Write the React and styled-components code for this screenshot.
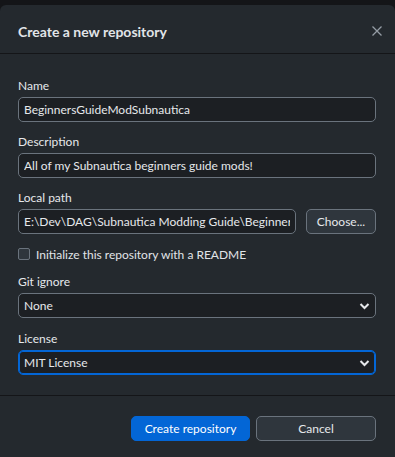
import React from "react";
import styled, { createGlobalStyle } from "styled-components";

const Global = createGlobalStyle`
  html, body {
    margin: 0;
    padding: 0;
    background: #141518;
    font-family: Lato, "Liberation Sans", sans-serif;
  }
`;

const Page = styled.div`
  width: 395px;
  height: 457px;
  padding-top: 5px;
  box-sizing: border-box;
  background: #141518;
  overflow: hidden;
`;

const Dialog = styled.div`
  height: 452px;
  background: #24292e;
  border-radius: 6px 6px 0 0;
  color: #e1e4e8;
  display: flex;
  flex-direction: column;
`;

const Header = styled.div`
  height: 49px;
  flex-shrink: 0;
  display: flex;
  align-items: center;
  justify-content: space-between;
  padding: 4px 11px 0 18px;
  box-sizing: border-box;
  border-bottom: 1px solid #141518;
`;

const Title = styled.h1`
  margin: 0;
  font-size: 14px;
  font-weight: 700;
  color: #e1e4e8;
`;

const Close = styled.button`
  background: none;
  border: none;
  padding: 0;
  width: 14px;
  height: 14px;
  display: flex;
  align-items: center;
  justify-content: center;
`;

const Body = styled.div`
  padding: 24px 19px 0 18px;
  height: 342px;
  flex-shrink: 0;
  display: flex;
  flex-direction: column;
  border-bottom: 1px solid #141518;
  box-sizing: border-box;
`;

const Field = styled.div`
  display: flex;
  flex-direction: column;
  margin-bottom: ${(p) => (p.$gap ?? 12)}px;
`;

const Label = styled.label`
  font-size: 12px;
  line-height: 16px;
  margin-bottom: 3px;
  color: #e6e8eb;
`;

const Input = styled.div`
  height: 25px;
  flex-shrink: 0;
  box-sizing: border-box;
  border: 1px solid ${(p) => (p.$focus ? "#0366d6" : "#6a737d")};
  box-shadow: ${(p) => (p.$focus ? "0 0 0 1px #0366d6 inset" : "none")};
  border-radius: 5px;
  background: #1c1f23;
  padding: 0 5px;
  font-size: 12px;
  display: flex;
  align-items: center;
  justify-content: space-between;
  gap: 4px;
  overflow: hidden;
  min-width: 0;
  color: #e6e8eb;
`;

const Value = styled.span`
  flex: 1;
  min-width: 0;
  white-space: nowrap;
  overflow: hidden;
  text-overflow: clip;
`;

const Row = styled.div`
  display: flex;
  gap: 10px;

  & > ${Input} {
    flex: 1;
  }
`;

const Button = styled.button`
  height: 25px;
  flex-shrink: 0;
  box-sizing: border-box;
  border-radius: 5px;
  font-family: inherit;
  font-size: 12px;
  color: ${(p) => (p.$primary ? "#ffffff" : "#e6e8eb")};
  background: ${(p) => (p.$primary ? "#0366d6" : "#2f363d")};
  border: 1px solid ${(p) => (p.$primary ? "#0366d6" : "#6a737d")};
  width: ${(p) => p.$w}px;
  padding: 0;
`;

const Check = styled.div`
  display: flex;
  align-items: center;
  gap: 6px;
  font-size: 12px;
  height: 12px;
  margin: 0 0 14px;
`;

const Box = styled.span`
  width: 12px;
  height: 12px;
  box-sizing: border-box;
  border: 1px solid #6a737d;
  border-radius: 2px;
  background: #2f363d;
`;

const Footer = styled.div`
  flex: 1;
  display: flex;
  justify-content: flex-end;
  align-items: flex-start;
  gap: 6px;
  padding: 20px 19px 0 0;
`;

const Chevron = () => (
  <svg width="11" height="10" viewBox="0 0 11 10">
    <path d="M1.5 3 L5.5 7 L9.5 3" fill="none" stroke="#e6e8eb" strokeWidth="2" />
  </svg>
);

export default function App() {
  return (
    <Page>
      <Global />
      <Dialog>
        <Header>
          <Title>Create a new repository</Title>
          <Close>
            <svg width="12" height="12" viewBox="0 0 12 12">
              <path d="M1.5 1.5 L10.5 10.5 M10.5 1.5 L1.5 10.5" stroke="#959da5" strokeWidth="1.3" />
            </svg>
          </Close>
        </Header>
        <Body>
          <Field>
            <Label>Name</Label>
            <Input><Value>BeginnersGuideModSubnautica</Value></Input>
          </Field>
          <Field>
            <Label>Description</Label>
            <Input><Value>All of my Subnautica beginners guide mods!</Value></Input>
          </Field>
          <Field $gap={14}>
            <Label>Local path</Label>
            <Row>
              <Input>
                <Value>E:\Dev\DAG\Subnautica Modding Guide\BeginnersGuideModSubnautica</Value>
              </Input>
              <Button $w={70}>Choose...</Button>
            </Row>
          </Field>
          <Check>
            <Box />
            Initialize this repository with a README
          </Check>
          <Field $gap={13}>
            <Label>Git ignore</Label>
            <Input>
              <Value>None</Value>
              <Chevron />
            </Input>
          </Field>
          <Field>
            <Label>License</Label>
            <Input $focus>
              <Value>MIT License</Value>
              <Chevron />
            </Input>
          </Field>
        </Body>
        <Footer>
          <Button $primary $w={119}>Create repository</Button>
          <Button $w={120}>Cancel</Button>
        </Footer>
      </Dialog>
    </Page>
  );
}
